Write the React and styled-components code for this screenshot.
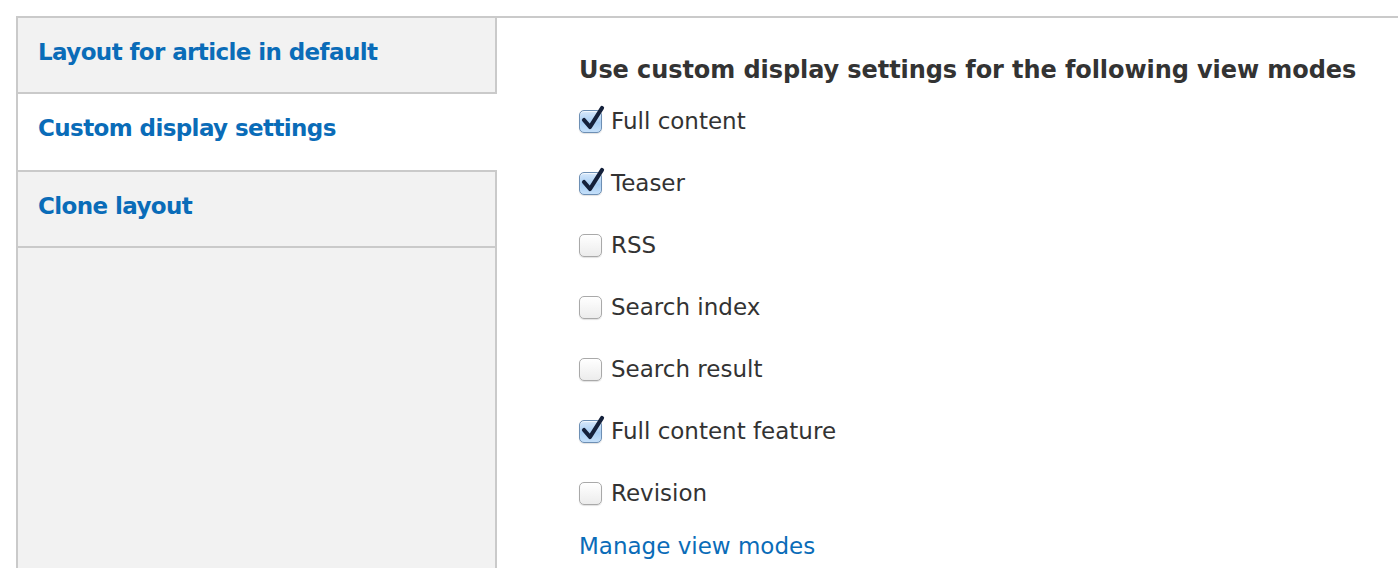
import styled, { createGlobalStyle } from "styled-components";

const GlobalStyle = createGlobalStyle`
  html, body {
    margin: 0;
    background: #fff;
  }
  body {
    font-family: "DejaVu Sans", Verdana, sans-serif;
    color: #333;
  }
`;

const Wrapper = styled.div`
  display: flex;
  margin: 16px 0 0 16px;
  border-top: 2px solid #cacaca;
  border-left: 2px solid #cacaca;
  min-height: 552px;
`;

const TabList = styled.ul`
  list-style: none;
  margin: 0;
  padding: 0;
  width: 477px;
  flex-shrink: 0;
  background: #f2f2f2;
  border-right: 2px solid #cacaca;
  display: flex;
  flex-direction: column;
`;

const TabItem = styled.li`
  height: ${({ $active }) => ($active ? "78px" : "76px")};
  box-sizing: border-box;
  padding: 19px 20px 0;
  border-bottom: 2px solid #cacaca;
  background: ${({ $active }) => ($active ? "#fff" : "transparent")};
  margin-right: ${({ $active }) => ($active ? "-2px" : "0")};
  font-size: 23px;
  line-height: 30px;
  font-weight: bold;
  letter-spacing: -0.6px;
  color: #0a6cb8;
  cursor: pointer;
  white-space: nowrap;
`;

const Content = styled.div`
  flex: 1;
  padding: 36px 0 0 82px;
`;

const Legend = styled.h2`
  margin: 0 0 19px;
  font-size: 24px;
  font-weight: bold;
  letter-spacing: -0.08px;
  line-height: 32px;
  color: #333;
  white-space: nowrap;
`;

const Options = styled.div`
  display: flex;
  flex-direction: column;
  gap: 30px;
`;

const Option = styled.label`
  display: flex;
  align-items: center;
  gap: 9px;
  height: 32px;
  font-size: 23px;
  color: #333;
`;

const Box = styled.span`
  position: relative;
  width: 23px;
  height: 23px;
  border-radius: 5px;
  box-sizing: border-box;
  border: 1px solid ${({ $checked }) => ($checked ? "#6d8fb4" : "#a9a9a9")};
  background: ${({ $checked }) =>
    $checked
      ? "linear-gradient(#d6e8fb, #a7cdf3 55%, #c5e0fa)"
      : "linear-gradient(#ffffff, #ececec)"};
  box-shadow: inset 0 1px 1px rgba(255, 255, 255, 0.8),
    0 1px 1px rgba(0, 0, 0, 0.12);
  flex-shrink: 0;
`;

const Tick = styled.svg`
  position: absolute;
  left: 1px;
  top: -5px;
  width: 26px;
  height: 26px;
  overflow: visible;
`;

const ManageLink = styled.a`
  display: inline-block;
  margin-top: 24px;
  font-size: 23px;
  color: #0a6cb8;
  text-decoration: none;
`;

const tabs = [
  { title: "Layout for article in default" },
  { title: "Custom display settings", active: true },
  { title: "Clone layout" },
];

const modes = [
  { label: "Full content", checked: true },
  { label: "Teaser", checked: true },
  { label: "RSS" },
  { label: "Search index" },
  { label: "Search result" },
  { label: "Full content feature", checked: true },
  { label: "Revision" },
];

const Checkbox = ({ checked }) => (
  <Box $checked={checked}>
    {checked && (
      <Tick viewBox="0 0 26 26">
        <path
          d="M3 14 L9 21 L21 2"
          fill="none"
          stroke="#14203a"
          strokeWidth="4.2"
          strokeLinecap="round"
          strokeLinejoin="round"
        />
      </Tick>
    )}
  </Box>
);

const App = () => {
  return (
    <>
      <GlobalStyle />
      <Wrapper>
        <TabList>
          {tabs.map(({ title, active }) => (
            <TabItem key={title} $active={active}>
              {title}
            </TabItem>
          ))}
        </TabList>
        <Content>
          <Legend>Use custom display settings for the following view modes</Legend>
          <Options>
            {modes.map(({ label, checked }) => (
              <Option key={label}>
                <Checkbox checked={checked} />
                {label}
              </Option>
            ))}
          </Options>
          <ManageLink href="#">Manage view modes</ManageLink>
        </Content>
      </Wrapper>
    </>
  );
};

export default App;
